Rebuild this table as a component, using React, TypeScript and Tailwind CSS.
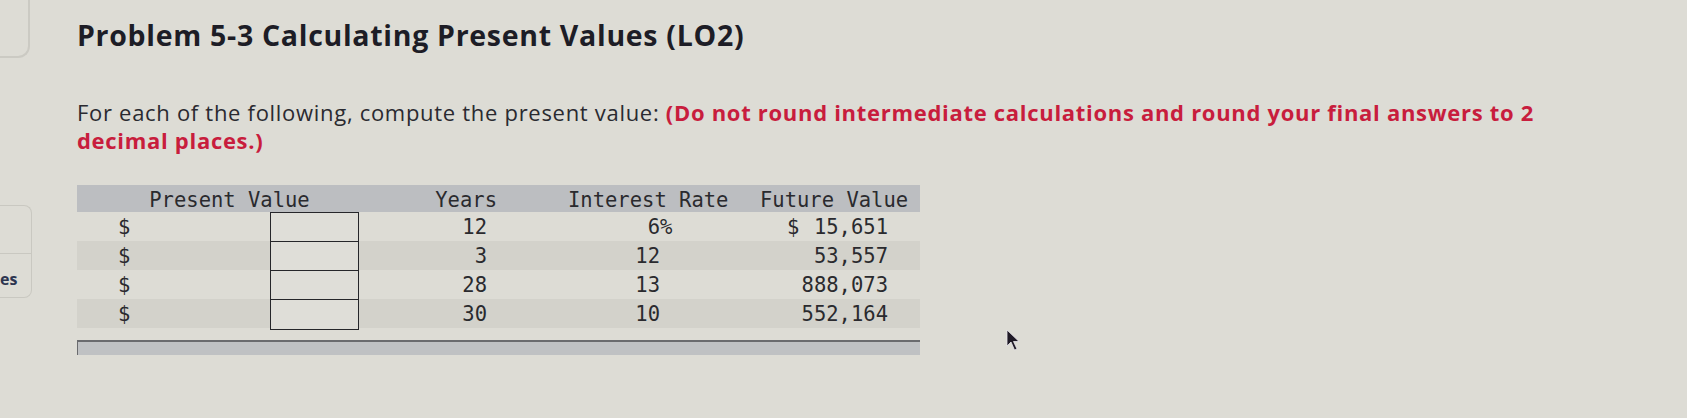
import React from "react";

interface Row {
  years: string;
  rate: string;
  pct: boolean;
  dollar: boolean;
  future: string;
}

const rows: Row[] = [
  { years: "12", rate: "6", pct: true, dollar: true, future: "15,651" },
  { years: "3", rate: "12", pct: false, dollar: false, future: "53,557" },
  { years: "28", rate: "13", pct: false, dollar: false, future: "888,073" },
  { years: "30", rate: "10", pct: false, dollar: false, future: "552,164" },
];

const mono = "font-['DejaVu_Sans_Mono',monospace] text-[20.5px] text-[#2a2a2e]";

const App = () => {
  return (
    <div className="relative w-[1687px] h-[418px] overflow-hidden bg-[#dddcd5] flex font-['Open_Sans',sans-serif]">
      {/* left rail, mostly off screen */}
      <div className="w-[32px] shrink-0 flex flex-col">
        <div className="h-[58px] w-[30px] border-r-2 border-b-2 border-[#cbcac3] rounded-br-xl" />
        <div className="mt-[147px] h-[48px] border-r border-t border-[#c9c8c1] rounded-tr-lg" />
        <div className="h-[45px] border-r border-t border-b border-[#c9c8c1] rounded-br-lg flex items-center pt-[6px]">
          <span className="text-[16px] font-bold text-[#2c3550] leading-none">es</span>
        </div>
      </div>

      <div className="pl-[45px] flex flex-col">
        <h1 className="pt-[18px] text-[28.5px] leading-[34px] font-bold tracking-[0.7px] text-[#1d1d26] whitespace-nowrap">
          Problem 5-3 Calculating Present Values (LO2)
        </h1>

        <p className="mt-[46px] w-[1475px] text-[22px] leading-[28px] tracking-[0.7px] text-[#2a2a30]">
          For each of the following, compute the present value:{" "}
          <span className="font-bold text-[#c81d3d]">
            (Do not round intermediate calculations and round your final answers to 2 decimal places.)
          </span>
        </p>

        <div className="mt-[31px] w-[843px]">
          <div className={`grid grid-cols-[293px_130px_240px_180px] h-[27px] bg-[#bcbec1] items-center ${mono}`}>
            <div className="text-center pl-[12px]">Present Value</div>
            <div className="text-right pr-[3px]">Years</div>
            <div className="pl-[68px]">Interest Rate</div>
            <div className="pl-[20px]">Future Value</div>
          </div>

          {rows.map((r, i) => (
            <div
              key={i}
              className={`grid grid-cols-[188px_105px_130px_240px_180px] h-[29px] items-center ${mono} ${
                i % 2 === 1 ? "bg-[#d3d2cb]" : ""
              }`}
            >
              <div className="pl-[41px]">$</div>
              <div className="pl-[5px] h-full">
                <div className="w-[89px] h-full border border-[#26262a] bg-[#dfded8]" />
              </div>
              <div className="text-right pr-[13px]">{r.years}</div>
              <div className="flex">
                <span className="w-[160px] text-right">{r.rate}</span>
                <span>{r.pct ? "%" : ""}</span>
              </div>
              <div className="flex pl-[47px] pr-[32px]">
                <span>{r.dollar ? "$" : ""}</span>
                <span className="ml-auto">{r.future}</span>
              </div>
            </div>
          ))}

          <div className="mt-[12px] h-[15px] bg-[#bfc1c3] border-t-2 border-l border-[#6a6b6e]" />
        </div>
      </div>

      {/* mouse pointer */}
      <svg className="absolute left-[1006px] top-[329px]" width="14" height="24" viewBox="0 0 14 24">
        <path d="M1 1 L1 17 L5 13 L8.5 21 L11 20 L7.5 12.5 L13 12.5 Z" fill="#1f1a26" stroke="#e8e6ee" strokeWidth="0.8" />
      </svg>
    </div>
  );
};

export default App;
